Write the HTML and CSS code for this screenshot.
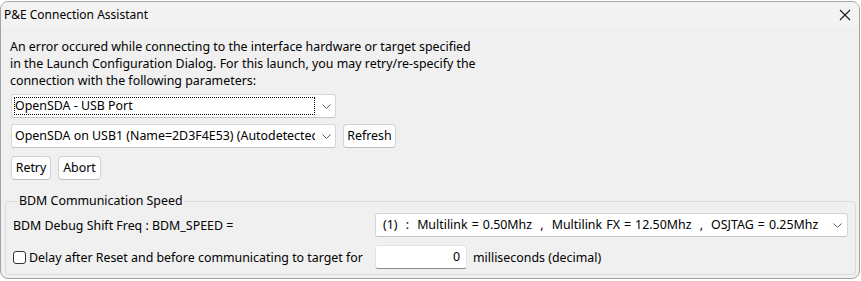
FILE: index.html
```html
<!DOCTYPE html>
<html>
<head>
<meta charset="utf-8">
<link rel="stylesheet" href="styles.css">
</head>
<body>
<div class="window">
  <div class="titlebar">
    <span class="title">P&amp;E Connection Assistant</span>
    <svg class="close" width="12" height="12" viewBox="0 0 12 12"><path d="M1 1 L11 11 M11 1 L1 11" stroke="#1a1a1a" stroke-width="1.1" fill="none"/></svg>
  </div>
  <div class="content">
    <p class="msg">An error occured while connecting to the interface hardware or target specified<br>in the Launch Configuration Dialog. For this launch, you may retry/re-specify the<br>connection with the following parameters:</p>
    <div class="row r1">
      <div class="select port">
        <span class="val"><span class="focus">OpenSDA - USB Port</span></span>
        <svg class="chev" width="9" height="5" viewBox="0 0 9 5"><path d="M0.5 0.5 L4.5 4.5 L8.5 0.5" stroke="#5c5c5c" stroke-width="1" fill="none"/></svg>
      </div>
    </div>
    <div class="row r2">
      <div class="select port">
        <span class="val clip">OpenSDA on USB1 (Name=2D3F4E53) (Autodetected)</span>
        <svg class="chev" width="9" height="5" viewBox="0 0 9 5"><path d="M0.5 0.5 L4.5 4.5 L8.5 0.5" stroke="#5c5c5c" stroke-width="1" fill="none"/></svg>
      </div>
      <div class="btn refresh">Refresh</div>
    </div>
    <div class="row r3">
      <div class="btn retry">Retry</div>
      <div class="btn abort">Abort</div>
    </div>
    <fieldset class="group">
      <legend>BDM Communication Speed</legend>
      <div class="grow">
        <span class="lbl">BDM Debug Shift Freq : BDM_SPEED =</span>
        <div class="select speed">
          <span class="val">(1)  :  Multilink = 0.50Mhz  ,  Multilink FX = 12.50Mhz  ,  OSJTAG = 0.25Mhz</span>
          <svg class="chev" width="9" height="5" viewBox="0 0 9 5"><path d="M0.5 0.5 L4.5 4.5 L8.5 0.5" stroke="#5c5c5c" stroke-width="1" fill="none"/></svg>
        </div>
      </div>
      <div class="grow">
        <span class="lbl chk"><span class="cb"></span>Delay after Reset and before communicating to target for</span>
        <div class="input">0</div>
        <span class="unit">milliseconds (decimal)</span>
      </div>
    </fieldset>
  </div>
</div>
</body>
</html>
```
FILE: styles.css
```css
html, body {
  margin: 0;
  padding: 0;
  background: #ffffff;
}
body {
  font-family: "Noto Sans", "Open Sans", sans-serif;
  font-size: 12.4px;
  color: #000;
}
.window {
  margin-top: 1px;
  width: 860px;
  height: 278px;
  box-sizing: border-box;
  border: 1px solid #a3a3a3;
  border-radius: 8px;
  overflow: hidden;
  background: #f0f0f0;
  display: flex;
  flex-direction: column;
}
.titlebar {
  height: 25px;
  flex: none;
  background: #f3f3f3;
  display: flex;
  align-items: center;
  justify-content: space-between;
  padding: 0 8px 0 3px;
  font-size: 12px;
}
.title {
  line-height: 16px;
}
.close {
  display: block;
}
.content {
  flex: 1;
  padding: 11px 0 0 0;
  display: flex;
  flex-direction: column;
}
.msg {
  margin: 0 0 5px 9px;
  line-height: 17px;
}
.row {
  display: flex;
  gap: 7px;
  margin-left: 10px;
}
.r1 { margin-bottom: 6px; }
.r2 { margin-bottom: 8px; }
.select {
  box-sizing: border-box;
  height: 24px;
  background: #fff;
  border: 1px solid #d6d6d6;
  border-bottom-color: #c4c4c4;
  border-radius: 3px;
  display: flex;
  align-items: center;
  padding: 0 4px 0 2px;
}
.select .val {
  flex: 1;
  white-space: pre;
  overflow: hidden;
  line-height: 16px;
}
.select .chev {
  flex: none;
  margin-left: 7px;
}
.port {
  width: 325px;
}
.focus {
  display: block;
  border: 1px dotted #000;
  line-height: 16px;
}
.clip {
  padding-left: 1px;
}
.btn {
  box-sizing: border-box;
  height: 24px;
  background: #fdfdfd;
  border: 1px solid #d2d2d2;
  border-bottom-color: #bdbdbd;
  border-radius: 4px;
  display: flex;
  align-items: center;
  justify-content: center;
  line-height: 16px;
}
.refresh { width: 53px; }
.retry { width: 40px; }
.abort { width: 43px; }
.group {
  margin: 13px 3px 0 4px;
  border: 1px solid #dadada;
  border-radius: 4px;
  padding: 4px 7px 5px 7px;
  min-width: 0;
}
.group legend {
  padding: 0 2px;
  margin-left: 4px;
  line-height: 16px;
}
.grow {
  display: flex;
  align-items: center;
}
.grow + .grow {
  margin-top: 8px;
}
.lbl {
  width: 362px;
  flex: none;
  white-space: nowrap;
  display: flex;
  align-items: center;
}
.speed {
  width: 473px;
  padding-left: 7px;
  padding-right: 5px;
}
.speed .val {
  word-spacing: 0.85px;
}
.cb {
  display: inline-block;
  width: 13px;
  height: 13px;
  box-sizing: border-box;
  border: 1px solid #333;
  border-radius: 3px;
  background: #fff;
  margin-right: 3px;
}
.input {
  box-sizing: border-box;
  width: 92px;
  height: 24px;
  background: #fff;
  border: 1px solid #e3e3e3;
  border-bottom: 1px solid #8a8a8a;
  border-radius: 3px;
  text-align: right;
  padding-right: 6px;
  line-height: 22px;
}
.unit {
  margin-left: 6px;
}
```
